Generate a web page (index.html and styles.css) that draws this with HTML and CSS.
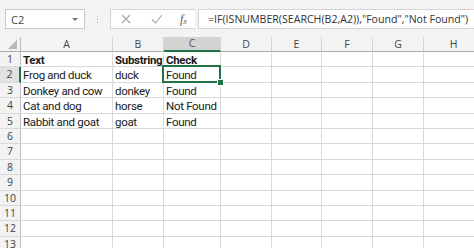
FILE: index.html
```html
<!DOCTYPE html>
<html>
<head>
<meta charset="utf-8">
<link rel="stylesheet" href="styles.css">
</head>
<body>
<div class="toolbar">
  <div class="namebox"><span>C2</span><span class="caret"></span></div>
  <div class="grip"><i></i><i></i><i></i></div>
  <div class="btns">
    <svg class="ico x" width="10" height="10" viewBox="0 0 10 10"><path d="M1 1L9 9M9 1L1 9" stroke="#a6a6a6" stroke-width="1.1" fill="none"/></svg>
    <svg class="ico ok" width="12" height="10" viewBox="0 0 12 10"><path d="M1 5.5L4.5 9L11 1" stroke="#a6a6a6" stroke-width="1.1" fill="none"/></svg>
    <span class="fx">f<sub>x</sub></span>
  </div>
  <div class="formula">=IF(ISNUMBER(SEARCH(B2,A2)),"Found","Not Found")</div>
</div>
<div class="sheet">
  <div class="gap"></div>
  <div class="grid">
    <div class="corner"><svg width="9" height="9" viewBox="0 0 9 9"><path d="M9 0V9H0Z" fill="#b8b8b8"/></svg></div>
    <div class="ch">A</div><div class="ch">B</div><div class="ch sel">C</div><div class="ch">D</div><div class="ch">E</div><div class="ch">F</div><div class="ch">G</div><div class="ch">H</div>

    <div class="rh">1</div><div class="c b">Text</div><div class="c b">Substring</div><div class="c b">Check</div><div class="c"></div><div class="c"></div><div class="c"></div><div class="c"></div><div class="c"></div>
    <div class="rh sel">2</div><div class="c">Frog and duck</div><div class="c">duck</div><div class="c active">Found</div><div class="c"></div><div class="c"></div><div class="c"></div><div class="c"></div><div class="c"></div>
    <div class="rh">3</div><div class="c">Donkey and cow</div><div class="c">donkey</div><div class="c">Found</div><div class="c"></div><div class="c"></div><div class="c"></div><div class="c"></div><div class="c"></div>
    <div class="rh">4</div><div class="c">Cat and dog</div><div class="c">horse</div><div class="c">Not Found</div><div class="c"></div><div class="c"></div><div class="c"></div><div class="c"></div><div class="c"></div>
    <div class="rh">5</div><div class="c">Rabbit and goat</div><div class="c">goat</div><div class="c">Found</div><div class="c"></div><div class="c"></div><div class="c"></div><div class="c"></div><div class="c"></div>
    <div class="rh">6</div><div class="c"></div><div class="c"></div><div class="c"></div><div class="c"></div><div class="c"></div><div class="c"></div><div class="c"></div><div class="c"></div>
    <div class="rh">7</div><div class="c"></div><div class="c"></div><div class="c"></div><div class="c"></div><div class="c"></div><div class="c"></div><div class="c"></div><div class="c"></div>
    <div class="rh">8</div><div class="c"></div><div class="c"></div><div class="c"></div><div class="c"></div><div class="c"></div><div class="c"></div><div class="c"></div><div class="c"></div>
    <div class="rh">9</div><div class="c"></div><div class="c"></div><div class="c"></div><div class="c"></div><div class="c"></div><div class="c"></div><div class="c"></div><div class="c"></div>
    <div class="rh">10</div><div class="c"></div><div class="c"></div><div class="c"></div><div class="c"></div><div class="c"></div><div class="c"></div><div class="c"></div><div class="c"></div>
    <div class="rh">11</div><div class="c"></div><div class="c"></div><div class="c"></div><div class="c"></div><div class="c"></div><div class="c"></div><div class="c"></div><div class="c"></div>
    <div class="rh">12</div><div class="c"></div><div class="c"></div><div class="c"></div><div class="c"></div><div class="c"></div><div class="c"></div><div class="c"></div><div class="c"></div>
    <div class="rh">13</div><div class="c"></div><div class="c"></div><div class="c"></div><div class="c"></div><div class="c"></div><div class="c"></div><div class="c"></div><div class="c"></div>
  </div>
</div>
</body>
</html>
```
FILE: styles.css
```css
html, body {
  margin: 0;
  padding: 0;
  width: 474px;
  height: 248px;
  overflow: hidden;
  background: #ffffff;
}
body {
  font-family: Lato, "Liberation Sans", sans-serif;
}
.toolbar {
  height: 29px;
  box-sizing: border-box;
  padding: 9px 0 0 5px;
  background: #f3f3f3;
  display: flex;
  align-items: flex-start;
  white-space: nowrap;
}
.namebox {
  width: 80px;
  height: 20px;
  box-sizing: border-box;
  background: #fff;
  border: 1px solid #c8c8c8;
  display: flex;
  align-items: center;
  justify-content: space-between;
  padding: 0 6px 0 5px;
  font-family: "Open Sans", "Noto Sans", sans-serif;
  font-size: 11px;
  color: #444;
}
.caret {
  width: 0;
  height: 0;
  border-left: 3px solid transparent;
  border-right: 3px solid transparent;
  border-top: 3px solid #777;
}
.grip {
  width: 25px;
  height: 20px;
  display: flex;
  flex-direction: column;
  align-items: center;
  justify-content: center;
  gap: 2px;
}
.grip i {
  width: 1px;
  height: 1px;
  background: #b0b0b0;
  display: block;
}
.btns {
  width: 85px;
  height: 20px;
  box-sizing: border-box;
  background: #fff;
  border: 1px solid #d4d4d4;
  border-right: none;
  display: flex;
  align-items: center;
  padding-left: 10px;
}
.ico.x { margin-right: 20px; }
.ico.ok { margin-right: 17px; }
.fx {
  font-family: "Liberation Serif", serif;
  font-style: italic;
  font-size: 12px;
  color: #555;
  line-height: 1;
}
.fx sub {
  font-size: 8px;
  vertical-align: -1px;
}
.formula {
  flex: 1;
  height: 20px;
  box-sizing: border-box;
  margin-left: 3px;
  background: #fff;
  border: 1px solid #d4d4d4;
  border-right: none;
  padding-left: 9px;
  font-family: "Open Sans", "Noto Sans", sans-serif;
  font-size: 10.6px;
  line-height: 18px;
  color: #333;
  overflow: hidden;
}
.gap {
  height: 8px;
  background: #f3f3f3;
}
.grid {
  display: grid;
  grid-template-columns: 21px 92px 51px 57px 51px 50px 51px 51px 60px;
  grid-template-rows: 15px;
  grid-auto-rows: 15.4px;
  font-family: Roboto, "Liberation Sans", sans-serif;
  font-size: 11.5px;
  letter-spacing: -0.3px;
  color: #1a1a1a;
}
.grid > div {
  box-sizing: border-box;
  border-right: 1px solid #d9d9d9;
  border-bottom: 1px solid #d9d9d9;
  overflow: visible;
  white-space: nowrap;
}
.corner {
  background: #f3f3f3;
  display: flex;
  align-items: flex-end;
  justify-content: flex-end;
  padding: 0 3px 2px 0;
  border-right-color: #bdbdbd !important;
  border-bottom-color: #ababab !important;
}
.corner svg { display: block; }
.ch {
  background: #f3f3f3;
  text-align: center;
  font-family: "Open Sans", "Noto Sans", sans-serif;
  font-size: 10.5px;
  letter-spacing: 0;
  line-height: 14px;
  color: #444;
  border-right-color: #d4d4d4 !important;
  border-bottom-color: #ababab !important;
}
.ch.sel {
  background: #d3d3d3;
  color: #555;
  border-bottom: 2px solid #217346 !important;
  line-height: 13px;
}
.rh {
  background: #f3f3f3;
  text-align: center;
  font-family: "Open Sans", "Noto Sans", sans-serif;
  font-size: 10.5px;
  letter-spacing: 0;
  line-height: 15px;
  color: #444;
  border-right-color: #bdbdbd !important;
  border-bottom-color: #dadada !important;
}
.rh.sel {
  background: #e1e1e1;
  border-right: 2px solid #217346 !important;
}
.c {
  padding-left: 2px;
  line-height: 16px;
}
.c.b { font-weight: bold; }
.c.active {
  position: relative;
}
.c.active::before {
  content: "";
  position: absolute;
  left: -2px;
  top: -2px;
  right: -1px;
  bottom: -1px;
  border: 2px solid #217346;
}
.c.active::after {
  content: "";
  position: absolute;
  right: -4px;
  bottom: -4px;
  width: 5px;
  height: 5px;
  background: #217346;
  border: 1px solid #fff;
}
```
